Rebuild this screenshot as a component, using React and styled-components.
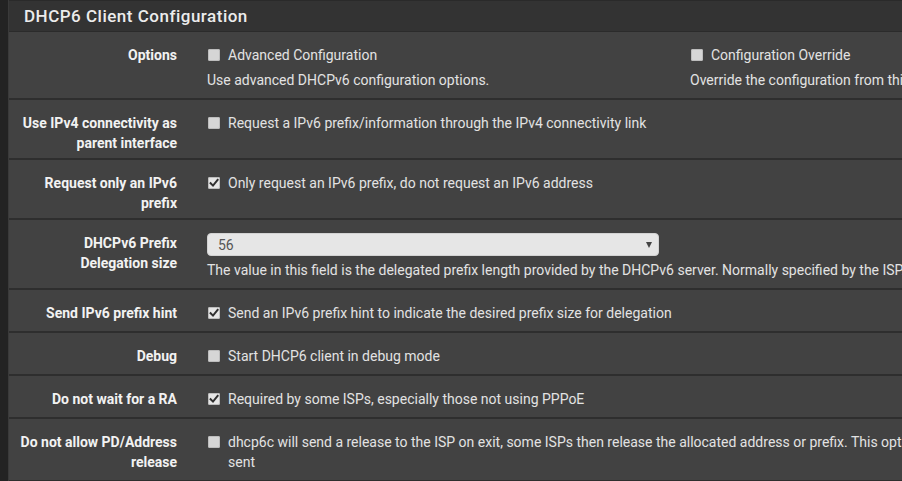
import React from "react";
import styled, { createGlobalStyle } from "styled-components";

const GlobalStyle = createGlobalStyle`
  html, body {
    margin: 0;
    padding: 0;
    background: #232323;
    overflow: hidden;
  }
  body {
    font-family: Roboto, "Noto Sans", "Liberation Sans", sans-serif;
    -webkit-font-smoothing: antialiased;
  }
`;

const Page = styled.div`
  padding-left: 8px;
  width: 1200px;
`;

const Panel = styled.section`
  background: #424242;
  border-left: 1px solid #3a3a3a;
`;

const PanelHeading = styled.header`
  box-sizing: border-box;
  height: 32px;
  line-height: 30px;
  background: #333333;
  border-top: 1px solid #2a2a2a;
  border-bottom: 1px solid #2b2b2b;
  padding-left: 15px;
  color: #ececec;
  font-size: 17px;
  font-weight: 500;
  letter-spacing: 0.5px;
`;

const Row = styled.div`
  display: flex;
  padding-top: 13px;
  border-bottom: 2px solid #2e2e2e;
`;

const Label = styled.div`
  flex: 0 0 160px;
  padding: 0 15px 5px 8px;
  text-align: right;
  color: #f2f2f2;
  font-size: 14px;
  font-weight: 700;
  line-height: 20px;
`;

const Content = styled.div`
  flex: 1;
  padding: 0 0 8px 15px;
  display: flex;
  flex-direction: ${(p) => (p.$split ? "row" : "column")};
  gap: ${(p) => p.$gap ?? 5}px;
`;

const SubColumn = styled.div`
  flex: 0 0 ${(p) => p.$width || "auto"};
  display: flex;
  flex-direction: column;
  gap: 5px;
`;

const CheckLine = styled.label`
  display: flex;
  align-items: flex-start;
  color: #e2e2e2;
  font-size: 14px;
  line-height: 20px;
  ${(p) => p.$wrap && "width: 910px;"}
`;

const Box = styled.span`
  flex: 0 0 auto;
  width: 12px;
  height: 12px;
  margin: 4px 8px 0 1px;
  border-radius: 2px;
  background: ${(p) => (p.$checked ? "#e6e6e6" : "#d6d6d6")};
  box-shadow: inset 0 0 0 1px #bdbdbd;
  display: flex;
  align-items: center;
  justify-content: center;
`;

const Help = styled.div`
  color: #e2e2e2;
  font-size: 14px;
  line-height: 20px;
  white-space: nowrap;
`;

const SelectBox = styled.div`
  width: 452px;
  height: 23px;
  box-sizing: border-box;
  border-radius: 4px;
  background: #e6e6e6;
  border: 1px solid #d2d2d2;
  display: flex;
  align-items: center;
  justify-content: space-between;
  padding: 0 6px 0 10px;
  color: #555;
  font-size: 14px;
`;

const Arrow = styled.span`
  width: 0;
  height: 0;
  border-left: 3.5px solid transparent;
  border-right: 3.5px solid transparent;
  border-top: 6px solid #444;
`;

const Check = ({ checked, children, wrap }) => (
  <CheckLine $wrap={wrap}>
    <Box $checked={checked}>
      {checked && (
        <svg width="10" height="10" viewBox="0 0 10 10">
          <path
            d="M1.6 5.2 L4 7.6 L8.6 2"
            fill="none"
            stroke="#2f2f2f"
            strokeWidth="2"
            strokeLinecap="square"
          />
        </svg>
      )}
    </Box>
    <span>{children}</span>
  </CheckLine>
);

export default function App() {
  return (
    <>
      <GlobalStyle />
      <Page>
        <Panel>
          <PanelHeading>DHCP6 Client Configuration</PanelHeading>

          <Row>
            <Label>Options</Label>
            <Content $split $gap={0}>
              <SubColumn $width="483px">
                <Check>Advanced Configuration</Check>
                <Help>Use advanced DHCPv6 configuration options.</Help>
              </SubColumn>
              <SubColumn>
                <Check>Configuration Override</Check>
                <Help>Override the configuration from this file.</Help>
              </SubColumn>
            </Content>
          </Row>

          <Row>
            <Label>Use IPv4 connectivity as parent interface</Label>
            <Content>
              <Check>Request a IPv6 prefix/information through the IPv4 connectivity link</Check>
            </Content>
          </Row>

          <Row>
            <Label>Request only an IPv6 prefix</Label>
            <Content>
              <Check checked>Only request an IPv6 prefix, do not request an IPv6 address</Check>
            </Content>
          </Row>

          <Row>
            <Label>DHCPv6 Prefix Delegation size</Label>
            <Content $gap={4}>
              <SelectBox>
                <span>56</span>
                <Arrow />
              </SelectBox>
              <Help>
                The value in this field is the delegated prefix length provided by the DHCPv6 server.
                Normally specified by the ISP.
              </Help>
            </Content>
          </Row>

          <Row>
            <Label>Send IPv6 prefix hint</Label>
            <Content>
              <Check checked>Send an IPv6 prefix hint to indicate the desired prefix size for delegation</Check>
            </Content>
          </Row>

          <Row>
            <Label>Debug</Label>
            <Content>
              <Check>Start DHCP6 client in debug mode</Check>
            </Content>
          </Row>

          <Row>
            <Label>Do not wait for a RA</Label>
            <Content>
              <Check checked>Required by some ISPs, especially those not using PPPoE</Check>
            </Content>
          </Row>

          <Row>
            <Label>Do not allow PD/Address release</Label>
            <Content>
              <Check wrap>
                dhcp6c will send a release to the ISP on exit, some ISPs then release the allocated
                address or prefix. This option prevents that signal ever being sent
              </Check>
            </Content>
          </Row>
        </Panel>
      </Page>
    </>
  );
}
